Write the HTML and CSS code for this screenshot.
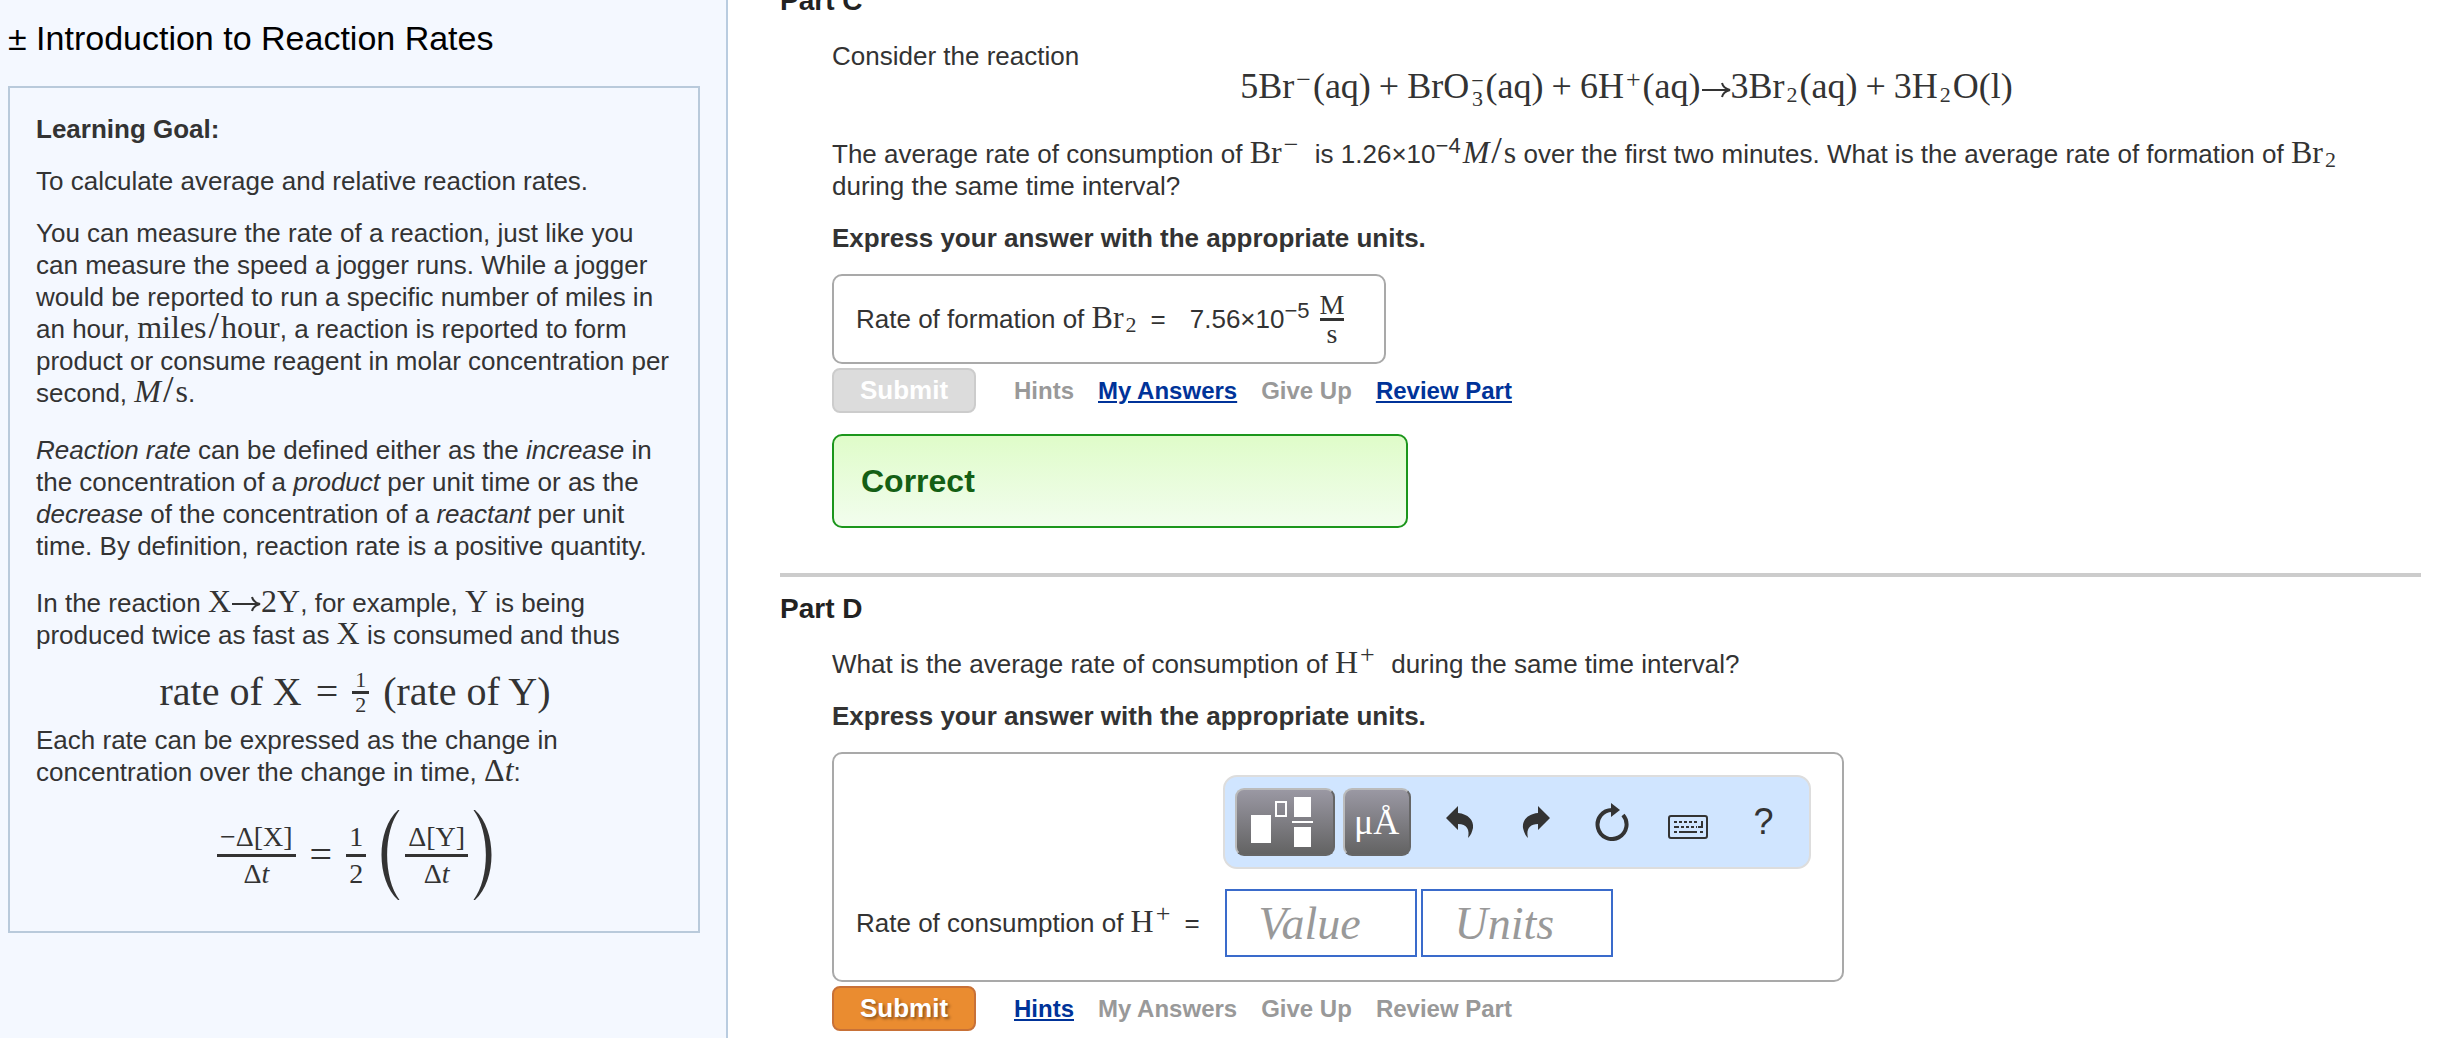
FILE: index.html
```html
<!DOCTYPE html>
<html lang="en">
<head>
  <meta charset="UTF-8">
  <meta name="viewport" content="width=device-width, initial-scale=1.0">
  <title>Introduction to Reaction Rates</title>
  <link rel="stylesheet" href="styles.css">
</head>
<body>
  <div class="page">
    <aside class="sidebar">
      <h1>± Introduction to Reaction Rates</h1>
      <div class="goal-box">
        <h2>Learning Goal:</h2>
        <p>To calculate average and relative reaction rates.</p>
        <p>You can measure the rate of a reaction, just like you can measure the speed a jogger runs. While a jogger would be reported to run a specific number of miles in an hour, <span class="math">miles<span class="slash">/</span>hour</span>, a reaction is reported to form product or consume reagent in molar concentration per second, <span class="math"><i>M</i><span class="slash">/</span>s</span>.</p>
        <p class="spaced"><i>Reaction rate</i> can be defined either as the <i>increase</i> in the concentration of a <i>product</i> per unit time or as the <i>decrease</i> of the concentration of a <i>reactant</i> per unit time. By definition, reaction rate is a positive quantity.</p>
        <p class="spaced">In the reaction <span class="math">X<svg class="arrow" viewBox="0 0 30 16"><path d="M1 8h27M21 1c1 4 4 6 8 7-4 1-7 3-8 7"/></svg>2Y</span>, for example, <span class="math">Y</span> is being produced twice as fast as <span class="math">X</span> is consumed and thus</p>
        <div class="formula">
          <span>rate of X</span>
          <span>=</span>
          <span class="frac small"><span>1</span><span>2</span></span>
          <span>(rate of Y)</span>
        </div>
        <p class="after-formula">Each rate can be expressed as the change in concentration over the change in time, <span class="math">Δ<i>t</i></span>:</p>
        <div class="formula formula-tall">
          <span class="frac"><span>−Δ[X]</span><span>Δ<i>t</i></span></span>
          <span>=</span>
          <span class="frac"><span>1</span><span>2</span></span>
          <span class="paren-group">
            <svg class="paren" viewBox="0 0 20 90"><path d="M18 0C-4 20-4 70 18 90h1.500C3 68 3 22 19.500 0z"/></svg>
            <span class="frac"><span>Δ[Y]</span><span>Δ<i>t</i></span></span>
            <svg class="paren" viewBox="0 0 20 90"><path d="M2 0C24 20 24 70 2 90H.500C17 68 17 22 .500 0z"/></svg>
          </span>
        </div>
      </div>
    </aside>

    <main class="content">
      <section class="part">
        <h2>Part C</h2>
        <div class="part-body">
          <p>Consider the reaction</p>
          <div class="equation">5Br<sup>−</sup>(aq)<span class="op">+</span>BrO<span class="stack"><span>−</span><span>3</span></span>(aq)<span class="op">+</span>6H<sup>+</sup>(aq)<svg class="arrow" viewBox="0 0 30 16"><path d="M1 8h27M21 1c1 4 4 6 8 7-4 1-7 3-8 7"/></svg>3Br<sub>2</sub>(aq)<span class="op">+</span>3H<sub>2</sub>O(l)</div>
          <p class="question">The average rate of consumption of <span class="math">Br<sup>−</sup></span>&nbsp; is 1.26×10<sup>−4</sup><span class="math unit"><i>M</i><span class="slash">/</span>s</span> over the first two minutes. What is the average rate of formation of <span class="math">Br<sub>2</sub></span> during the same time interval?</p>
          <p class="instruction">Express your answer with the appropriate units.</p>
          <div class="answer-box answer-done">
            <span>Rate of formation of <span class="math">Br<sub>2</sub></span></span>
            <span class="equals">=</span>
            <span class="result">7.56×10<sup>−5</sup></span>
            <span class="frac unit-frac"><span>M</span><span>s</span></span>
          </div>
          <div class="actions">
            <button class="submit" disabled>Submit</button>
            <span class="action">Hints</span>
            <a class="action" href="#answers-c">My Answers</a>
            <span class="action">Give Up</span>
            <a class="action" href="#review-c">Review Part</a>
          </div>
          <div class="feedback">Correct</div>
        </div>
      </section>

      <hr>

      <section class="part">
        <h2>Part D</h2>
        <div class="part-body">
          <p>What is the average rate of consumption of <span class="math">H<sup>+</sup></span>&nbsp; during the same time interval?</p>
          <p class="instruction">Express your answer with the appropriate units.</p>
          <div class="answer-box answer-form">
            <div class="toolbar">
              <button class="tool tool-dark tool-wide" aria-label="Templates">
                <svg width="62" height="50" viewBox="0 0 62 50">
                  <path fill="#fff" d="M0 18h20v28H0zM43 0h17v20H43zM41 24h21v2H41zM43 30h17v20H43z"/>
                  <path fill="none" stroke="#fff" stroke-width="2" d="M25 5h10v14H25z"/>
                </svg>
              </button>
              <button class="tool tool-dark" aria-label="Symbols">μÅ</button>
              <button class="tool tool-plain" aria-label="Undo">
                <svg width="28" height="32" viewBox="0 0 28 32"><path d="M0 12L12 0v7c10 1 16 7 15 15-1 4-2 7-5 10 2-8-1-14-10-14v6z"/></svg>
              </button>
              <button class="tool tool-plain" aria-label="Redo">
                <svg width="28" height="32" viewBox="0 0 28 32"><path d="M28 12L16 0v7C6 8 0 14 1 22c1 4 2 7 5 10-2-8 1-14 10-14v6z"/></svg>
              </button>
              <button class="tool tool-plain" aria-label="Reset">
                <svg width="34" height="38" viewBox="0 0 34 38"><path fill="none" stroke="#333" stroke-width="4" d="M28 12A14.500 14.500 0 1 1 17 7"/><path d="M16 0l9 7-9 7z"/></svg>
              </button>
              <button class="tool tool-plain tool-keyboard" aria-label="Keyboard shortcuts">
                <svg width="40" height="24" viewBox="0 0 40 24">
                  <rect x="1" y="1" width="38" height="22" rx="2" fill="none" stroke="#333" stroke-width="2"/>
                  <path fill="none" stroke="#333" stroke-width="2" stroke-dasharray="3 2" d="M6 7h23M13 12h16"/>
                  <path fill="none" stroke="#333" stroke-width="2" d="M34 6v7M30 12h5M6 12h5M6 17h3M11 17h18M32 17h3"/>
                </svg>
              </button>
              <button class="tool tool-plain" aria-label="Help">?</button>
            </div>
            <div class="answer-label" id="consumption-label">
              <span>Rate of consumption of <span class="math">H<sup>+</sup></span></span>
              <span class="equals">=</span>
            </div>
            <div class="fields" role="group" aria-labelledby="consumption-label">
              <input type="text" placeholder="Value" aria-label="Value">
              <input type="text" placeholder="Units" aria-label="Units">
            </div>
          </div>
          <div class="actions">
            <button class="submit">Submit</button>
            <a class="action" href="#hints-d">Hints</a>
            <span class="action">My Answers</span>
            <span class="action">Give Up</span>
            <span class="action">Review Part</span>
          </div>
        </div>
      </section>
    </main>
  </div>
</body>
</html>
```

FILE: styles.css
```css
* {
  box-sizing: border-box;
}
body, html {
  margin: 0;
  padding: 0;
  height: 100%;
  overflow: hidden;
}
body {
  font-family: "Liberation Sans", Arial, sans-serif;
  font-size: 26px;
  line-height: 32px;
  color: #333;
  background-color: #fff;
}
h1, h2, p {
  margin: 0;
}
.page {
  display: flex;
  height: 100%;
}

/* Left column */
.sidebar {
  flex: 0 0 728px;
  padding: 19px 26px 0 8px;
  background-color: #f4f8ff;
  border-right: 2px solid #b9cce0;
}
.sidebar h1 {
  font-size: 34px;
  font-weight: normal;
  line-height: 38px;
  color: #000;
  margin-bottom: 29px;
}
.goal-box {
  border: 2px solid #b9cadb;
  padding: 25px 24px 20px 26px;
}
.goal-box h2 {
  font-size: 26px;
}
.goal-box p {
  margin-top: 20px;
}
.goal-box .spaced {
  margin-top: 25px;
}
.goal-box .after-formula {
  margin-top: 0;
}

/* Math */
.math, .formula, .equation {
  font-family: "Liberation Serif", "Times New Roman", serif;
}
.math {
  font-size: 32px;
  line-height: 1px;
  white-space: nowrap;
}
.slash {
  font-size: 38px;
  margin: 0 2px;
}
sup, sub {
  font-size: 22px;
  line-height: 1px;
}
sup {
  vertical-align: 10px;
}
sub {
  vertical-align: -4px;
  margin: 0 2px;
}
.math sup, .equation sup {
  font-size: 26px;
  margin: 0 2px;
}
.arrow {
  width: 30px;
  height: 16px;
  fill: none;
  stroke: #333;
  stroke-width: 2;
}
.formula {
  display: flex;
  align-items: center;
  justify-content: center;
  gap: 14px;
  height: 64px;
  margin-top: 9px;
  font-size: 40px;
}
.formula-tall {
  height: 112px;
  margin-top: 11px;
}
.frac {
  display: inline-flex;
  flex-direction: column;
  text-align: center;
  font-size: 28px;
  line-height: 34px;
}
.frac > span:first-child {
  border-bottom: 3px solid #333;
  padding: 0 3px;
}
.frac.small {
  font-size: 22px;
  line-height: 22px;
}
.paren-group {
  display: flex;
  align-items: center;
  gap: 5px;
}
.paren {
  width: 20px;
  height: 90px;
  fill: #333;
}

/* Right column */
.content {
  flex: 1;
  min-width: 0;
  margin-top: -15px;
  padding: 0 33px 0 52px;
}
.part h2 {
  font-size: 28px;
  color: #222;
}
.part-body {
  margin: 23px 0 0 52px;
}
.equation {
  height: 28px;
  font-size: 36px;
  line-height: 28px;
  margin-bottom: 38px;
  text-align: center;
  white-space: nowrap;
}
.op {
  margin: 0 8px;
}
.stack {
  display: inline-flex;
  flex-direction: column;
  vertical-align: middle;
  margin: 0 2px;
  font-size: 22px;
  line-height: 18px;
}
.question {
  padding-right: 32px;
}
.unit {
  margin-left: 2px;
}
.instruction {
  font-weight: bold;
  margin-top: 20px;
}
.answer-box {
  width: fit-content;
  margin-top: 20px;
  border: 2px solid #a9a9a9;
  border-radius: 10px;
}
.answer-done {
  display: flex;
  align-items: center;
  height: 90px;
  padding: 0 40px 0 22px;
}
.equals {
  margin-left: 12px;
}
.result {
  margin: 0 10px 0 24px;
}
.frac.unit-frac {
  font-family: "Liberation Serif", "Times New Roman", serif;
  line-height: 26px;
}
.frac.unit-frac > span {
  padding: 0;
}
.actions {
  display: flex;
  align-items: center;
  gap: 24px;
  margin-top: 4px;
}
.submit {
  width: 144px;
  height: 45px;
  margin-right: 14px;
  padding: 0;
  font: bold 26px "Liberation Sans", Arial, sans-serif;
  color: #fff;
  text-shadow: 2px 2px 3px rgba(0,0,0,0.4);
  background-color: #ea8c30;
  border: 2px solid #c87137;
  border-radius: 8px;
}
.submit:disabled {
  background-color: #dcdcdc;
  border-color: #ccc;
  text-shadow: none;
}
.action {
  font-size: 24px;
  font-weight: bold;
  color: #999;
}
a.action {
  color: #039;
}
.feedback {
  width: 576px;
  margin-top: 21px;
  padding: 29px 27px;
  font-size: 32px;
  font-weight: bold;
  color: #145f14;
  background: linear-gradient(#dffcc9, #f2fdee);
  border: 2px solid #1c961c;
  border-radius: 10px;
}
hr {
  height: 4px;
  margin: 45px 0 16px;
  border: none;
  background-color: #ccc;
}

/* Answer entry */
.answer-form {
  display: grid;
  grid-template-columns: auto auto;
  align-items: center;
  gap: 20px 23px;
  padding: 21px 31px 23px 22px;
}
.toolbar {
  grid-column: 2;
  display: flex;
  align-items: center;
  gap: 8px;
  width: 588px;
  height: 94px;
  padding: 0 10px;
  background-color: #d0e5ff;
  border: 2px solid #ddd;
  border-radius: 14px;
}
.tool {
  display: flex;
  align-items: center;
  justify-content: center;
  width: 68px;
  height: 68px;
  padding: 0;
  color: #333;
  background: none;
  border: none;
  fill: #333;
  font: 36px "Liberation Sans", Arial, sans-serif;
}
.tool-dark {
  color: #fff;
  font-family: "Liberation Serif", "Times New Roman", serif;
  background: linear-gradient(#9a98a3, #636363);
  border: 2px solid;
  border-color: #bbb #666 #666 #bbb;
  border-radius: 9px;
}
.tool-dark + .tool-plain {
  margin-left: 7px;
}
.tool-wide {
  width: 100px;
  padding-right: 6px;
}
.tool-keyboard {
  padding-top: 10px;
}
.answer-label {
  display: flex;
}
.fields {
  display: flex;
  gap: 4px;
  padding-left: 2px;
}
.fields input {
  width: 192px;
  height: 68px;
  padding: 0 32px;
  font: italic 46px "Liberation Serif", "Times New Roman", serif;
  color: #333;
  background-color: #fff;
  border: 2px solid #3a6bcb;
  outline: none;
}
.fields input::placeholder {
  color: #999;
}
```
